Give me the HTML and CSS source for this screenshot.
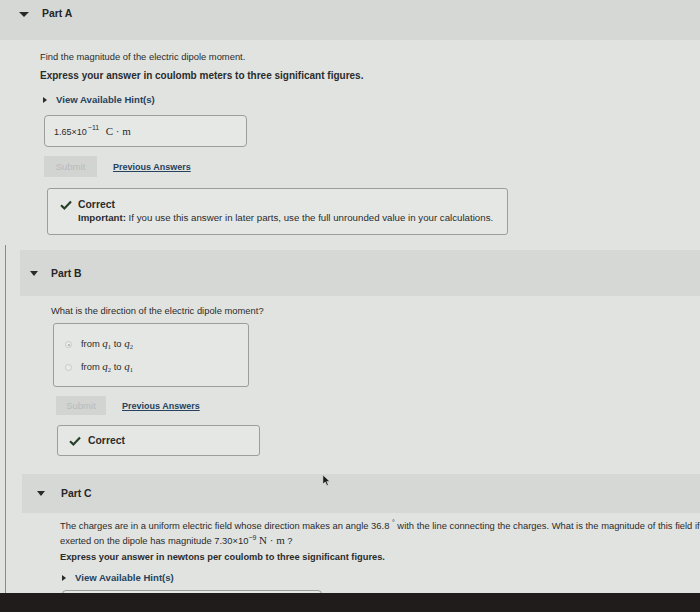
FILE: index.html
```html
<!DOCTYPE html>
<html>
<head>
<meta charset="utf-8">
<link rel="stylesheet" href="styles.css">
</head>
<body>
<div class="page">
  <div class="head head-a"><span class="tri"></span><span>Part A</span></div>
  <div class="body body-a">
    <p class="line first">Find the magnitude of the electric dipole moment.</p>
    <p class="line strong">Express your answer in coulomb meters to three significant figures.</p>
    <div class="hint"><span class="tri-r"></span>View Available Hint(s)</div>
    <div class="answer"><span class="num">1.65×10<sup>−11</sup></span> <span class="unit">C · m</span></div>
    <div class="actions"><span class="submit">Submit</span><a class="prev">Previous Answers</a></div>
    <div class="feedback fb-a">
      <svg class="check" viewBox="0 0 12 10" width="12" height="10"><path d="M1 5.2 L4.4 8.4 L11 1.6" fill="none" stroke="#28402a" stroke-width="2.2"/></svg>
      <div class="fb-text"><b class="fb-title">Correct</b><div class="imp"><b>Important:</b> If you use this answer in later parts, use the full unrounded value in your calculations.</div></div>
    </div>
  </div>

  <div class="rest">
    <div class="head head-b"><span class="tri"></span><span>Part B</span></div>
    <div class="body body-b">
      <p class="line">What is the direction of the electric dipole moment?</p>
      <div class="choices">
        <div class="choice"><span class="radio on"></span><span class="ctext">from <i class="q">q</i><sub>1</sub> to <i class="q">q</i><sub>2</sub></span></div>
        <div class="choice"><span class="radio"></span><span class="ctext">from <i class="q">q</i><sub>2</sub> to <i class="q">q</i><sub>1</sub></span></div>
      </div>
      <div class="actions act-b"><span class="submit">Submit</span><a class="prev">Previous Answers</a></div>
      <div class="feedback fb-b">
        <svg class="check" viewBox="0 0 12 10" width="12" height="10"><path d="M1 5.2 L4.4 8.4 L11 1.6" fill="none" stroke="#28402a" stroke-width="2.2"/></svg>
        <b class="fb-title">Correct</b>
      </div>
    </div>

    <div class="head head-c"><span class="tri"></span><span>Part C</span></div>
    <div class="body body-c">
      <p class="line nowrap">The charges are in a uniform electric field whose direction makes an angle 36.8 <sup>°</sup> with the line connecting the charges. What is the magnitude of this field if</p>
      <p class="line nowrap">exerted on the dipole has magnitude 7.30×10<sup>−9</sup> <span class="unit">N · m</span> ?</p>
      <p class="line strong">Express your answer in newtons per coulomb to three significant figures.</p>
      <div class="hint hint-c"><span class="tri-r"></span>View Available Hint(s)</div>
      <div class="answer answer-c"></div>
    </div>
  </div>
</div>
<div class="taskbar"></div>
<svg class="cursor" viewBox="0 0 10 14" width="9" height="13"><path d="M1 1 L1 11 L3.6 8.6 L5.4 12.6 L7 11.9 L5.3 8 L8.6 8 Z" fill="#1a1a1a" stroke="#e8e8e8" stroke-width="0.6"/></svg>
</body>
</html>
```

FILE: styles.css
```css
html, body {
  margin: 0;
  padding: 0;
}
body {
  width: 700px;
  height: 612px;
  overflow: hidden;
  display: flex;
  flex-direction: column;
  background: #e1e3e1;
  font-family: "Liberation Sans", Arial, sans-serif;
  font-size: 9.4px;
  color: #2b2b2b;
  position: relative;
}
.page {
  flex: 1;
  overflow: hidden;
}
.taskbar {
  height: 19px;
  background: #1f1c1b;
  flex: none;
}
p { margin: 0; }

.head {
  display: flex;
  align-items: center;
  background: #d6d8d6;
  font-weight: bold;
  font-size: 10.4px;
  color: #262626;
  box-sizing: border-box;
}
.head-a {
  height: 40px;
  padding-left: 19px;
  align-items: flex-start;
  padding-top: 8px;
}
.head-b {
  height: 46px;
  margin-left: 14px;
  padding-left: 10px;
}
.head-c {
  height: 39px;
  margin-left: 16px;
  padding-left: 15px;
}
.tri {
  width: 0;
  height: 0;
  border-left: 4px solid transparent;
  border-right: 4px solid transparent;
  border-top: 5px solid #2a2a2a;
  margin-right: 13px;
}
.head-c .tri { margin-right: 16px; }
.head-a .tri {
  margin-top: 4px;
  margin-right: 13px;
  border-left-width: 5px;
  border-right-width: 5px;
}
.tri-r {
  display: inline-block;
  width: 0;
  height: 0;
  border-top: 3.5px solid transparent;
  border-bottom: 3.5px solid transparent;
  border-left: 4px solid #2a2a2a;
  margin-right: 9px;
}

.body { display: flex; flex-direction: column; align-items: flex-start; }
.line { line-height: 14px; }
.strong { font-weight: bold; font-size: 10px; }
.nowrap { white-space: nowrap; }
sup { font-size: 7px; line-height: 0; vertical-align: 4px; }
sub { font-size: 6.5px; line-height: 0; vertical-align: -2px; font-family: "Liberation Serif", serif; }
.unit { font-family: "Liberation Serif", "Times New Roman", serif; font-size: 11px; }
.q { font-family: "Liberation Serif", serif; font-size: 11px; }

.body-a { padding-left: 40px; padding-top: 10px; }
.body-a .strong { margin-top: 5px; }
.hint {
  display: flex;
  align-items: center;
  font-weight: bold;
  font-size: 9.6px;
  color: #26425c;
  margin-top: 10px;
  margin-left: 3px;
  line-height: 14px;
}
.answer {
  box-sizing: border-box;
  width: 203px;
  height: 32px;
  margin-top: 8px;
  margin-left: 4px;
  border: 1px solid #9c9e9c;
  border-radius: 4px;
  background: #e6e8e6;
  padding: 8px 0 0 9px;
  font-size: 9px;
  line-height: 14px;
}
.answer sup { vertical-align: 5px; margin-left: 1px; }
.num { margin-right: 4px; }
.actions {
  display: flex;
  align-items: center;
  margin-top: 9px;
  margin-left: 4px;
}
.submit {
  width: 53px;
  height: 21px;
  background: #d2d4d2;
  color: #b9bbb9;
  display: flex;
  align-items: center;
  justify-content: center;
  font-size: 9.5px;
}
.prev {
  margin-left: 16px;
  color: #26425c;
  font-weight: bold;
  text-decoration: underline;
  font-size: 9px;
}
.feedback {
  box-sizing: border-box;
  border: 1px solid #9c9e9c;
  border-radius: 3px;
  background: #e5e7e5;
  display: flex;
}
.fb-a {
  width: 461px;
  height: 47px;
  margin-top: 11px;
  margin-left: 7px;
  padding: 9px 0 0 12px;
  align-items: flex-start;
}
.check { flex: none; margin-right: 6px; margin-top: 2px; }
.fb-text { line-height: 13px; }
.imp { font-size: 9.7px; }
.fb-title { font-size: 10.4px; }

.rest {
  border-left: 1px solid #8a8c8a;
  margin-left: 5px;
  margin-top: 10px;
  padding-top: 5px;
}

.body-b { padding-left: 45px; padding-top: 8px; }
.choices {
  box-sizing: border-box;
  width: 196px;
  height: 64px;
  margin-top: 5px;
  margin-left: 2px;
  border: 1px solid #9c9e9c;
  border-radius: 3px;
  background: #e5e7e5;
  padding: 12px 0 0 11px;
}
.choice {
  height: 14px;
  line-height: 14px;
  margin-bottom: 9px;
  white-space: nowrap;
}
.radio {
  display: inline-block;
  vertical-align: -1px;
  width: 7px;
  height: 7px;
  border-radius: 50%;
  border: 1px solid #c8cac8;
  background: #e9ebe9;
  margin-right: 9px;
  box-sizing: border-box;
  position: relative;
}
.radio.on::after {
  content: "";
  position: absolute;
  left: 1.5px;
  top: 1.5px;
  width: 2px;
  height: 2px;
  border-radius: 50%;
  background: #a8aaa8;
}
.act-b { margin-left: 5px; margin-top: 9px; }
.act-b .submit { width: 50px; height: 19px; }
.fb-b {
  width: 203px;
  height: 31px;
  margin-top: 10px;
  margin-left: 6px;
  padding-left: 11px;
  align-items: center;
}
.fb-b .check { margin-top: 0; margin-right: 7px; }

.head-c { margin-top: 18px; }
.body-c { padding-left: 54px; padding-top: 6px; }
.body-c .strong { margin-top: 2px; font-size: 9.3px; }
.hint-c { margin-top: 7px; margin-left: 2px; }
.answer-c { width: 260px; margin-left: 2px; margin-top: 5px; }

.cursor {
  position: absolute;
  left: 322px;
  top: 474px;
}
```
